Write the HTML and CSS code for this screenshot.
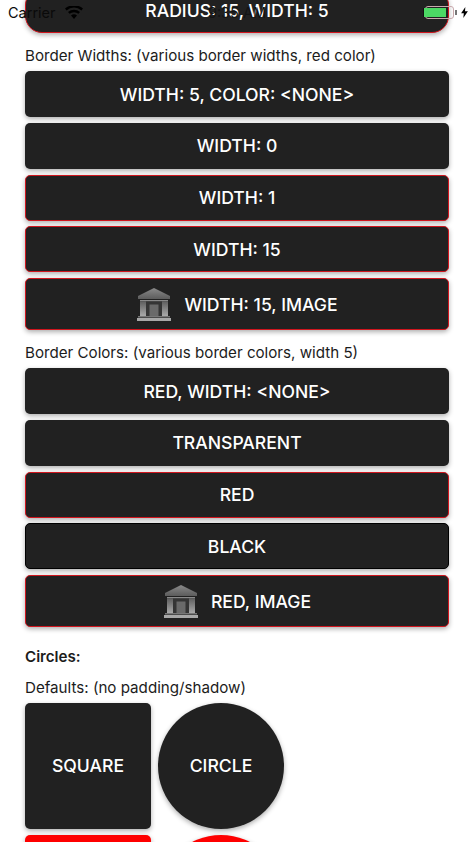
FILE: index.html
```html
<!DOCTYPE html>
<html lang="en">
<head>
<meta charset="utf-8">
<title>Buttons</title>
<link rel="stylesheet" href="styles.css">
</head>
<body>
<svg class="defs" width="0" height="0" aria-hidden="true">
  <defs>
    <linearGradient id="bank-a" x1="0" y1="0" x2="0" y2="1">
      <stop offset="0" stop-color="#5f5f5f"/>
      <stop offset="1" stop-color="#a9a9a9"/>
    </linearGradient>
    <linearGradient id="bank-b" x1="0" y1="0" x2="0" y2="1">
      <stop offset="0" stop-color="#8a8a8a"/>
      <stop offset="1" stop-color="#5c5c5c"/>
    </linearGradient>
    <symbol id="bank" viewBox="0 0 36 36">
      <path fill="url(#bank-b)" d="M18 2 L34 10 V13 H2 V10 Z"/>
      <rect x="4" y="14" width="28" height="1.5" fill="#8a8a8a"/>
      <rect x="4" y="15.500" width="6" height="14.500" fill="url(#bank-a)"/>
      <rect x="26" y="15.500" width="6" height="14.500" fill="url(#bank-a)"/>
      <rect x="10" y="15.500" width="16" height="14.500" fill="#353535"/>
      <rect x="13.500" y="18.500" width="9" height="11.500" fill="#6a6a6a"/>
      <rect x="2" y="30" width="32" height="1.500" fill="#777"/>
      <rect x="1" y="32" width="34" height="3" fill="#a8a8a8"/>
    </symbol>
  </defs>
</svg>
<header class="status">
  <div class="status-left">
    <span>Carrier</span>
    <svg class="wifi" viewBox="0 0 18 13" width="17" height="12"><path d="M9 13 L6 9.400 A4.800 4.800 0 0 1 12 9.400 Z M4.600 7.800 L3 6 A9.200 9.200 0 0 1 15 6 L13.400 7.800 A6.800 6.800 0 0 0 4.600 7.800 Z M1.600 4.400 L0 2.600 A13.600 13.600 0 0 1 18 2.600 L16.400 4.400 A11.200 11.200 0 0 0 1.600 4.400 Z"/></svg>
  </div>
  <span class="time">9:35 AM</span>
  <div class="status-right">
    <span class="battery"><span class="battery-fill"></span></span>
    <span class="battery-tip"></span>
    <svg class="bolt" viewBox="0 0 8 13" width="7" height="11"><path d="M5 0 L0 7.400 H3.200 L2.600 13 L8 5 H4.600 Z"/></svg>
  </div>
</header>
<main class="content">
  <button class="btn radius red-edge">RADIUS: 15, WIDTH: 5</button>
  <p class="label">Border Widths: (various border widths, red color)</p>
  <div class="stack">
    <button class="btn">WIDTH: 5, COLOR: &lt;NONE&gt;</button>
    <button class="btn">WIDTH: 0</button>
    <button class="btn red-edge">WIDTH: 1</button>
    <button class="btn red-edge">WIDTH: 15</button>
    <button class="btn tall red-edge"><svg class="icon"><use href="#bank"/></svg>WIDTH: 15, IMAGE</button>
  </div>
  <p class="label">Border Colors: (various border colors, width 5)</p>
  <div class="stack">
    <button class="btn">RED, WIDTH: &lt;NONE&gt;</button>
    <button class="btn">TRANSPARENT</button>
    <button class="btn red-edge">RED</button>
    <button class="btn black-edge">BLACK</button>
    <button class="btn tall red-edge"><svg class="icon"><use href="#bank"/></svg>RED, IMAGE</button>
  </div>
  <h2 class="heading">Circles:</h2>
  <p class="label">Defaults: (no padding/shadow)</p>
  <div class="grid">
    <button class="btn tile">SQUARE</button>
    <button class="btn tile round">CIRCLE</button>
    <button class="btn tile fill-red"></button>
    <button class="btn tile round fill-red"></button>
  </div>
</main>
</body>
</html>
```
FILE: styles.css
```css
* { box-sizing: border-box; }
html, body { margin: 0; height: 842px; overflow: hidden; background: #fff; }
body { position: relative; font-family: Inter, "Liberation Sans", sans-serif; color: #1c1c1c; }
.defs { position: absolute; }
.status {
  position: absolute; top: 0; left: 0; right: 0; height: 25px; z-index: 2;
  display: flex; align-items: center; justify-content: space-between;
  padding: 0 6px 0 8px; font-size: 14.5px; color: #0a0a0a;
}
.status-left { display: flex; align-items: center; gap: 9px; }
.wifi, .bolt { fill: #000; }
.wifi { width: 18px; height: 13px; }
.time { position: absolute; left: 0; right: 0; text-align: center; color: #141414; }
.status-right { display: flex; align-items: center; }
.battery {
  width: 29px; height: 13px; border-radius: 3px; padding: 1px;
  display: block; border: 1px solid #c9a9ad;
}
.battery-fill { display: block; width: 22px; height: 100%; background: #4cd964; margin-left: -3px; box-shadow: -1px 0 0 #111; }
.battery-tip { width: 2px; height: 5px; background: #777; margin: 0 4px 0 1px; }
.content { margin-top: -12px; padding: 0 25px; }
.btn {
  display: flex; align-items: center; justify-content: center; gap: 12px;
  width: 100%; height: 46px; padding: 0; border: 0; border-radius: 5px;
  background: #212121; color: #fff; font: 450 17.6px Inter, "Liberation Sans", sans-serif;
  box-shadow: 0 2px 5px rgba(0,0,0,.32);
}
.red-edge { border: 1.5px solid #d0161e; }
.black-edge { border: 1.5px solid #000; }
.radius { height: 45px; border-radius: 17px; }
.tall { height: 52px; }
.icon { width: 36px; height: 36px; }
.label { margin: 14px 0 6px; font-size: 15.15px; line-height: 18px; }
.stack { display: flex; flex-direction: column; gap: 5.75px; }
.heading { margin: 21px 0 -1px; font-size: 15.15px; line-height: 18px; font-weight: 600; }
.grid { display: grid; grid-template-columns: 126px 126px; gap: 6px 7px; }
.tile { height: 126px; padding-bottom: 2px; }
.round { border-radius: 50%; }
.fill-red { background: #fe0000; }
```
